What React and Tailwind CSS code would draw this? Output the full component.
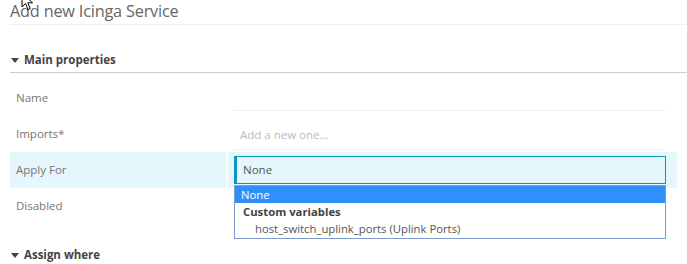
export default function App() {
  const font = { fontFamily: '"Open Sans", "Noto Sans", sans-serif' };

  const Caret = () => (
    <svg width="8" height="5" viewBox="0 0 8 5" className="ml-[1px]">
      <path d="M0 0 L8 0 L4 5 Z" fill="#444" />
    </svg>
  );

  return (
    <div className="relative w-[687px] h-[264px] overflow-hidden bg-white pl-[10px] text-[#555]" style={font}>
      {/* mouse cursor */}
      <svg className="absolute left-[21px] top-[-8px]" width="14" height="20" viewBox="0 0 14 20">
        <path d="M1 1 L1 15 L4.5 11.5 L7 17.5 L9.2 16.6 L6.8 10.8 L11.5 10.8 Z" fill="#fff" stroke="#000" strokeWidth="1" strokeLinejoin="round" />
      </svg>

      <div className="h-[25px] border-b border-[#eee] flex items-end">
        <h1 className="text-[16.3px] leading-[22px] pb-[2px] text-[#666] tracking-[-0.2px]">Add new Icinga Service</h1>
      </div>

      <div className="h-[48px] flex items-end pb-[4px] border-b border-[#ccc]">
        <span className="text-[11.5px] leading-[16px] font-bold text-[#444] flex items-center gap-[5px]">
          <Caret />
          Main properties
        </span>
      </div>

      <div className="pt-[7px] pr-[10px] text-[11.5px]">
        <div className="flex h-[36px] gap-[2px]">
          <div className="w-[216px] pl-[6px] flex items-center text-[#777]">Name</div>
          <div className="flex-1 px-[6px] pr-[11px] pt-[4px]">
            <div className="h-[27px] border-b border-[#eee]" />
          </div>
        </div>

        <div className="flex h-[36px] gap-[2px]">
          <div className="w-[216px] pl-[6px] flex items-center text-[#777]">Imports*</div>
          <div className="flex-1 px-[6px] pr-[11px] pt-[5px]">
            <div className="h-[29px] border-b border-[#eee] flex items-center pl-[6px] text-[#bbb]">Add a new one...</div>
          </div>
        </div>

        <div className="flex h-[36px] gap-[2px]">
          <div className="w-[216px] pl-[6px] flex items-center text-[#777] bg-[#e5f6fd]">Apply For</div>
          <div className="flex-1 bg-[#e5f6fd] px-[6px] pr-[11px] pt-[4px] relative">
            <div className="h-[28px] border border-[#0a96c0] border-l-[3px] flex items-center pl-[6px] text-[#555]">None</div>
            <div className="absolute left-[6px] right-[11px] top-[33px] h-[54px] bg-white border border-[#7f9bcb] z-10 text-[11.3px]">
              <div className="h-[17px] bg-[#2f8ffb] text-white leading-[17px] pl-[6px]">None</div>
              <div className="h-[17px] leading-[17px] pl-[8px] font-bold text-[#444]">Custom variables</div>
              <div className="h-[17px] leading-[17px] pl-[20px] text-[#555]">host_switch_uplink_ports (Uplink Ports)</div>
            </div>
          </div>
        </div>

        <div className="flex h-[36px] gap-[2px]">
          <div className="w-[216px] pl-[6px] flex items-center text-[#777]">Disabled</div>
          <div className="flex-1" />
        </div>
      </div>

      <div className="h-[40px] flex items-end pb-[1px]">
        <span className="text-[11.5px] leading-[16px] font-bold text-[#444] flex items-center gap-[5px]">
          <Caret />
          Assign where
        </span>
      </div>
    </div>
  );
}
